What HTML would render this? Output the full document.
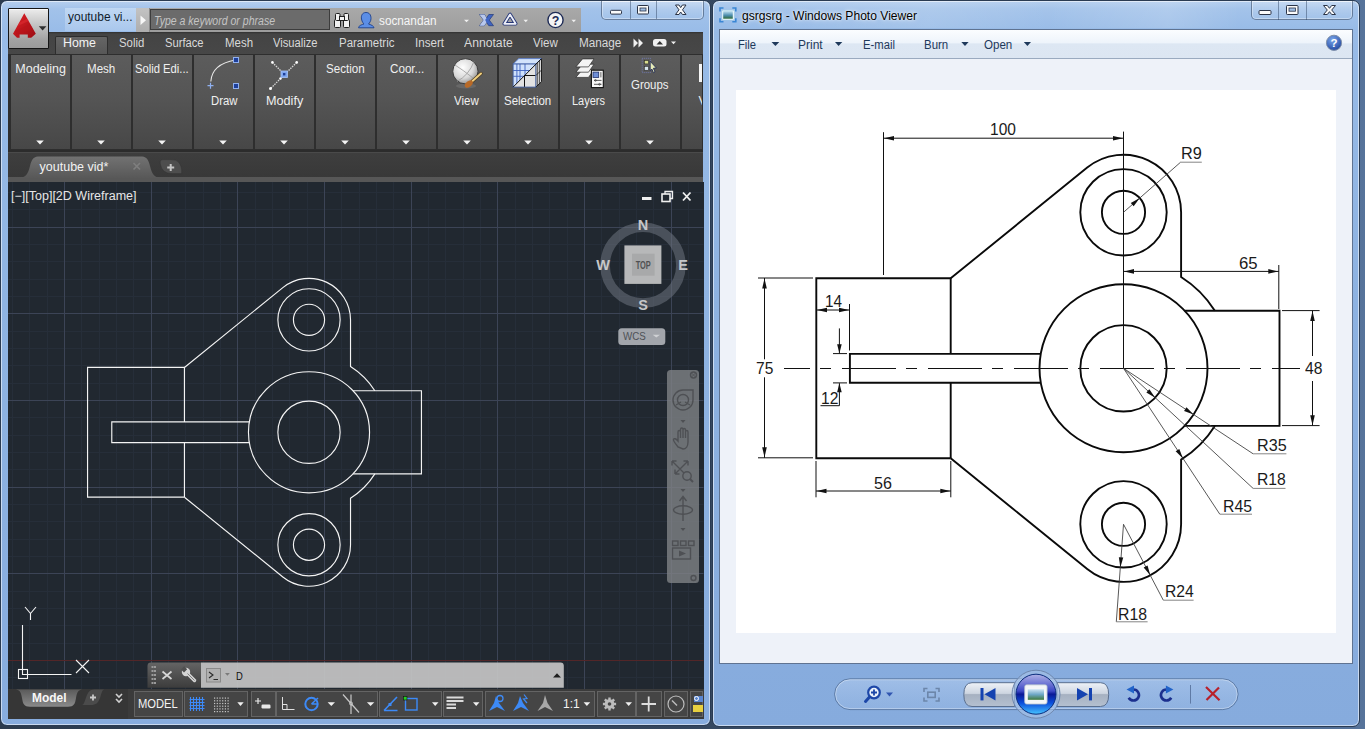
<!DOCTYPE html><html><head><meta charset="utf-8"><style>
html,body{margin:0;padding:0;}
body{width:1365px;height:729px;overflow:hidden;position:relative;background:#3a4f69;font-family:"Liberation Sans",sans-serif;}
.r{position:absolute;box-sizing:border-box;}
.t{position:absolute;white-space:nowrap;}
svg{position:absolute;left:0;top:0;overflow:visible;}
</style></head><body>
<div class="r" style="left:0.00px;top:0.00px;width:1365.00px;height:729.00px;background:linear-gradient(90deg,#2c3b4e,#34465e 50%,#56739a);"></div>
<div class="r" style="left:0.00px;top:0.00px;width:711.00px;height:726.00px;border-radius:7px;background:linear-gradient(180deg,#b6cfee 0px,#a2c2ea 8px,#99bce8 30px,#8fb4e2 300px,#87acde 726px);border:1px solid #2a3b52;box-shadow:inset 0 0 0 1px rgba(255,255,255,0.55);"></div>
<div class="r" style="left:64.50px;top:8.00px;width:71.50px;height:23.00px;background:linear-gradient(180deg,rgba(215,232,250,0.55),rgba(200,220,245,0.35));"></div>
<div class="t" style="left:68.00px;top:8.75px;font-size:12.50px;line-height:17px;color:#101c2c;transform:scaleX(0.9570);transform-origin:left center;">youtube vi...</div>
<div class="r" style="left:136.00px;top:8.00px;width:445.00px;height:23.50px;background:linear-gradient(180deg,#a9a9a9,#9d9d9d);"></div>
<div class="r" style="left:136.00px;top:8.00px;width:14.00px;height:23.50px;background:linear-gradient(180deg,#c3c3c3,#adadad);border-right:1px solid #8a8a8a;"></div>
<svg width="1365" height="729"><path d="M140.5 15.5 L146 20.3 L140.5 25 Z" fill="#f8f8f8"/></svg>
<div class="r" style="left:150.00px;top:9.30px;width:180.00px;height:21.10px;background:#6b6b6b;border:1px solid #3c3c3c;"></div>
<div class="t" style="left:153.80px;top:12.84px;font-size:12.00px;line-height:16px;color:#c4c4c4;font-style:italic;transform:scaleX(0.8779);transform-origin:left center;">Type a keyword or phrase</div>
<svg width="1365" height="729">
<g fill="#f2f2f2" stroke="#202020" stroke-width="1">
<rect x="334.5" y="19.5" width="6" height="8" rx="1"/><rect x="343.5" y="19.5" width="6" height="8" rx="1"/>
<rect x="335.5" y="13.5" width="4.5" height="7" rx="1"/><rect x="344" y="13.5" width="4.5" height="7" rx="1"/>
<rect x="339.5" y="16.5" width="5" height="4"/>
</g>
<path d="M366 12.5 C362 12.5 361 16 361.5 19 C362 22 363.5 23.5 364 24 C360 25 358.5 26.5 358.5 27.8 L374 27.8 C374 26.5 372 25 368.5 24 C369.5 23 371 21 371 18.5 C371 15 369.5 12.5 366 12.5 Z" fill="#5b8ee6" stroke="#1d3f8c" stroke-width="0.9"/>
<path d="M464 19.8 L469 19.8 L466.5 22.3 Z" fill="#f0f0f0"/>
<path d="M479.5 14.5 L484.5 14.5 L486.5 18 L488.8 14.5 L493.5 14.5 L489.3 20.1 L493.5 25.7 L488.8 25.7 L486.5 22.4 L484.2 25.7 L479.5 25.7 L483.6 20.1 Z" fill="#3f64c2" stroke="#22397a" stroke-width="0.7"/>
<path d="M479.5 14.5 L484.5 14.5 L486.5 18 L485.2 20.1 L486.5 22.4 L484.2 25.7 L479.5 25.7 L483.6 20.1 Z" fill="#b9c8ec"/>
<path d="M510 14.5 L504.3 23.8 L515.7 23.8 Z" fill="none" stroke="#263778" stroke-width="3.6" stroke-linejoin="round"/>
<path d="M510 14.5 L504.3 23.8 L515.7 23.8 Z" fill="none" stroke="#eef0f8" stroke-width="1.8" stroke-linejoin="round"/>
<path d="M523.5 19.8 L528 19.8 L525.8 22.3 Z" fill="#f0f0f0"/>
<circle cx="555.5" cy="20" r="7.6" fill="#f4f4f4" stroke="#1d2a55" stroke-width="1.4"/>
<text x="555.5" y="24.6" font-family="Liberation Sans" font-weight="bold" font-size="12.5" fill="#1d2a55" text-anchor="middle">?</text>
<path d="M571.5 19.8 L576 19.8 L573.8 22.3 Z" fill="#f0f0f0"/>
</svg>
<div class="t" style="left:379.00px;top:12.95px;font-size:12.50px;line-height:17px;color:#f6f6f6;transform:scaleX(0.9402);transform-origin:left center;">socnandan</div>
<div class="r" style="left:601.00px;top:0.50px;width:103.00px;height:19.00px;border:1px solid rgba(40,60,90,0.55);border-top:none;border-radius:0 0 5px 5px;background:linear-gradient(180deg,rgba(255,255,255,0.25),rgba(255,255,255,0.05));box-shadow:inset 0 0 0 1px rgba(255,255,255,0.35);"></div>
<div class="r" style="left:629.50px;top:1.00px;width:1.00px;height:18.00px;background:rgba(40,60,90,0.45);"></div>
<div class="r" style="left:656.00px;top:1.00px;width:1.00px;height:18.00px;background:rgba(40,60,90,0.45);"></div>
<svg width="1365" height="729">
<rect x="610.5" y="10.3" width="11" height="3.8" rx="1" fill="#fafafa" stroke="#2a3346" stroke-width="1"/>
<rect x="637.5" y="5.5" width="11" height="8.5" rx="0.8" fill="#fafafa" stroke="#2a3346" stroke-width="1"/>
<rect x="640" y="8" width="6" height="3" fill="#9fbde4" stroke="#2a3346" stroke-width="0.8"/>
<path d="M675.5 5 L679 5 L680.7 7.6 L682.4 5 L686 5 L682.5 9.8 L686 14.5 L682.4 14.5 L680.7 12 L679 14.5 L675.5 14.5 L679 9.8 Z" fill="#fafafa" stroke="#2a3346" stroke-width="1"/>
</svg>
<div class="r" style="left:8.00px;top:31.50px;width:695.00px;height:22.00px;background:linear-gradient(180deg,#303030 0px,#444444 2px,#474747 100%);"></div>
<div class="r" style="left:54.50px;top:35.50px;width:53.00px;height:18.00px;background:linear-gradient(180deg,#656565,#575757);border:1px solid #2e2e2e;border-bottom:none;border-radius:2px 2px 0 0;"></div>
<div class="t" style="left:63.30px;top:34.75px;font-size:12.50px;line-height:17px;color:#f4f4f4;transform:scaleX(0.9897);transform-origin:left center;">Home</div>
<div class="t" style="left:119.30px;top:34.75px;font-size:12.50px;line-height:17px;color:#d9d9d9;transform:scaleX(0.9102);transform-origin:left center;">Solid</div>
<div class="t" style="left:165.40px;top:34.75px;font-size:12.50px;line-height:17px;color:#d9d9d9;transform:scaleX(0.8961);transform-origin:left center;">Surface</div>
<div class="t" style="left:224.50px;top:34.75px;font-size:12.50px;line-height:17px;color:#d9d9d9;transform:scaleX(0.9161);transform-origin:left center;">Mesh</div>
<div class="t" style="left:273.40px;top:34.75px;font-size:12.50px;line-height:17px;color:#d9d9d9;transform:scaleX(0.8956);transform-origin:left center;">Visualize</div>
<div class="t" style="left:339.00px;top:34.75px;font-size:12.50px;line-height:17px;color:#d9d9d9;transform:scaleX(0.9168);transform-origin:left center;">Parametric</div>
<div class="t" style="left:414.70px;top:34.75px;font-size:12.50px;line-height:17px;color:#d9d9d9;transform:scaleX(0.9309);transform-origin:left center;">Insert</div>
<div class="t" style="left:464.20px;top:34.75px;font-size:12.50px;line-height:17px;color:#d9d9d9;transform:scaleX(0.9752);transform-origin:left center;">Annotate</div>
<div class="t" style="left:533.10px;top:34.75px;font-size:12.50px;line-height:17px;color:#d9d9d9;transform:scaleX(0.9231);transform-origin:left center;">View</div>
<div class="t" style="left:578.50px;top:34.75px;font-size:12.50px;line-height:17px;color:#d9d9d9;transform:scaleX(0.9365);transform-origin:left center;">Manage</div>
<svg width="1365" height="729">
<path d="M633.5 38.5 L633.5 47.5 L638 43 Z M638.5 38.5 L638.5 47.5 L643 43 Z" fill="#f0f0f0"/>
<rect x="653" y="39" width="13.5" height="7.5" rx="2.5" fill="#f0f0f0"/>
<path d="M656.5 44.5 L659.8 41 L663 44.5 Z" fill="#333"/>
<path d="M671 41.5 L676 41.5 L673.5 44.3 Z" fill="#f0f0f0"/>
</svg>
<div class="r" style="left:8.00px;top:53.50px;width:695.00px;height:96.00px;background:#2e2e2e;"></div>
<div class="r" style="left:10.50px;top:54.50px;width:59.00px;height:94.00px;background:linear-gradient(180deg,#5c5c5c 0%,#555555 45%,#474747 100%);"></div>
<svg width="1365" height="729"><path d="M36.2 140.5 L43.8 140.5 L40.0 144.5 Z" fill="#f4f4f4"/></svg>
<div class="r" style="left:71.50px;top:54.50px;width:59.00px;height:94.00px;background:linear-gradient(180deg,#5c5c5c 0%,#555555 45%,#474747 100%);"></div>
<svg width="1365" height="729"><path d="M97.2 140.5 L104.8 140.5 L101.0 144.5 Z" fill="#f4f4f4"/></svg>
<div class="r" style="left:132.50px;top:54.50px;width:59.00px;height:94.00px;background:linear-gradient(180deg,#5c5c5c 0%,#555555 45%,#474747 100%);"></div>
<svg width="1365" height="729"><path d="M158.2 140.5 L165.8 140.5 L162.0 144.5 Z" fill="#f4f4f4"/></svg>
<div class="r" style="left:193.50px;top:54.50px;width:59.00px;height:94.00px;background:linear-gradient(180deg,#5c5c5c 0%,#555555 45%,#474747 100%);"></div>
<svg width="1365" height="729"><path d="M219.2 140.5 L226.8 140.5 L223.0 144.5 Z" fill="#f4f4f4"/></svg>
<div class="r" style="left:254.50px;top:54.50px;width:59.00px;height:94.00px;background:linear-gradient(180deg,#5c5c5c 0%,#555555 45%,#474747 100%);"></div>
<svg width="1365" height="729"><path d="M280.2 140.5 L287.8 140.5 L284.0 144.5 Z" fill="#f4f4f4"/></svg>
<div class="r" style="left:315.50px;top:54.50px;width:59.00px;height:94.00px;background:linear-gradient(180deg,#5c5c5c 0%,#555555 45%,#474747 100%);"></div>
<svg width="1365" height="729"><path d="M341.2 140.5 L348.8 140.5 L345.0 144.5 Z" fill="#f4f4f4"/></svg>
<div class="r" style="left:376.50px;top:54.50px;width:59.00px;height:94.00px;background:linear-gradient(180deg,#5c5c5c 0%,#555555 45%,#474747 100%);"></div>
<svg width="1365" height="729"><path d="M402.2 140.5 L409.8 140.5 L406.0 144.5 Z" fill="#f4f4f4"/></svg>
<div class="r" style="left:437.50px;top:54.50px;width:59.00px;height:94.00px;background:linear-gradient(180deg,#5c5c5c 0%,#555555 45%,#474747 100%);"></div>
<svg width="1365" height="729"><path d="M463.2 140.5 L470.8 140.5 L467.0 144.5 Z" fill="#f4f4f4"/></svg>
<div class="r" style="left:498.50px;top:54.50px;width:59.00px;height:94.00px;background:linear-gradient(180deg,#5c5c5c 0%,#555555 45%,#474747 100%);"></div>
<svg width="1365" height="729"><path d="M524.2 140.5 L531.8 140.5 L528.0 144.5 Z" fill="#f4f4f4"/></svg>
<div class="r" style="left:559.50px;top:54.50px;width:59.00px;height:94.00px;background:linear-gradient(180deg,#5c5c5c 0%,#555555 45%,#474747 100%);"></div>
<svg width="1365" height="729"><path d="M585.2 140.5 L592.8 140.5 L589.0 144.5 Z" fill="#f4f4f4"/></svg>
<div class="r" style="left:620.50px;top:54.50px;width:59.00px;height:94.00px;background:linear-gradient(180deg,#5c5c5c 0%,#555555 45%,#474747 100%);"></div>
<svg width="1365" height="729"><path d="M646.2 140.5 L653.8 140.5 L650.0 144.5 Z" fill="#f4f4f4"/></svg>
<div class="r" style="left:681.50px;top:54.50px;width:20.50px;height:94.00px;background:linear-gradient(180deg,#5c5c5c 0%,#555555 45%,#474747 100%);"></div>
<div class="t" style="left:15.30px;top:60.85px;font-size:12.50px;line-height:17px;color:#f0f0f0;">Modeling</div>
<div class="t" style="left:86.50px;top:60.85px;font-size:12.50px;line-height:17px;color:#f0f0f0;transform:scaleX(0.9259);transform-origin:left center;">Mesh</div>
<div class="t" style="left:135.00px;top:60.85px;font-size:12.50px;line-height:17px;color:#f0f0f0;transform:scaleX(0.8987);transform-origin:left center;">Solid Edi...</div>
<div class="t" style="left:210.50px;top:92.75px;font-size:12.50px;line-height:17px;color:#f0f0f0;transform:scaleX(0.9085);transform-origin:left center;">Draw</div>
<div class="t" style="left:265.70px;top:92.75px;font-size:12.50px;line-height:17px;color:#f0f0f0;transform:scaleX(1.0105);transform-origin:left center;">Modify</div>
<div class="t" style="left:326.00px;top:60.85px;font-size:12.50px;line-height:17px;color:#f0f0f0;transform:scaleX(0.9282);transform-origin:left center;">Section</div>
<div class="t" style="left:389.50px;top:60.85px;font-size:12.50px;line-height:17px;color:#f0f0f0;transform:scaleX(0.9316);transform-origin:left center;">Coor...</div>
<div class="t" style="left:454.00px;top:92.75px;font-size:12.50px;line-height:17px;color:#f0f0f0;transform:scaleX(0.9193);transform-origin:left center;">View</div>
<div class="t" style="left:504.30px;top:92.75px;font-size:12.50px;line-height:17px;color:#f0f0f0;transform:scaleX(0.9179);transform-origin:left center;">Selection</div>
<div class="t" style="left:572.00px;top:92.75px;font-size:12.50px;line-height:17px;color:#f0f0f0;transform:scaleX(0.8796);transform-origin:left center;">Layers</div>
<div class="t" style="left:631.20px;top:76.95px;font-size:12.50px;line-height:17px;color:#f0f0f0;transform:scaleX(0.9173);transform-origin:left center;">Groups</div>
<div class="r" style="left:698.70px;top:64.00px;width:3.30px;height:18.00px;background:#f4f4f4;"></div>
<div class="r" style="left:681.5px;top:54px;width:20.5px;height:94px;overflow:hidden;"><div class="t" style="left:17.00px;top:38.75px;font-size:12.50px;line-height:17px;color:#f0f0f0;">V</div></div>
<svg width="1365" height="729">
<!-- draw icon -->
<path d="M210.8 81.5 Q212 64 235.5 60" fill="none" stroke="#e8e8e8" stroke-width="1.1"/>
<rect x="233.5" y="57.5" width="5" height="5" fill="#1e3f9a" stroke="#8fb0f0" stroke-width="1"/>
<rect x="233.5" y="83.5" width="5" height="5" fill="#1e3f9a" stroke="#8fb0f0" stroke-width="1"/>
<path d="M207.5 85.7 L213.5 85.7 M210.5 82.7 L210.5 88.7" stroke="#8fb0f0" stroke-width="1.2"/>
<!-- modify icon -->
<path d="M272.4 62.4 L284.3 74.3 M296.7 62.4 L270.5 88.6" stroke="#d8d8d8" stroke-width="1.3" stroke-dasharray="1.5 1"/>
<circle cx="272.4" cy="62.4" r="1.3" fill="#fff"/><circle cx="296.7" cy="62.4" r="1.3" fill="#fff"/><circle cx="270.5" cy="88.6" r="1.5" fill="#fff"/><circle cx="280.5" cy="78.5" r="1.2" fill="#fff"/>
<rect x="281" y="71" width="6.5" height="6.5" fill="#7da6f0" stroke="#a9c4f8" stroke-width="0.8"/>
<rect x="283" y="73" width="2.4" height="2.4" fill="#1e3f9a"/>
<!-- view icon -->
<defs><radialGradient id="sph" cx="0.4" cy="0.35" r="0.7"><stop offset="0" stop-color="#ffffff"/><stop offset="0.6" stop-color="#d9d9d9"/><stop offset="1" stop-color="#8c8c8c"/></radialGradient>
<linearGradient id="cube" x1="0" y1="0" x2="1" y2="1"><stop offset="0" stop-color="#d5e6fb"/><stop offset="1" stop-color="#8fb0de"/></linearGradient></defs>
<ellipse cx="466" cy="86" rx="10" ry="2.5" fill="#8a8a8a" opacity="0.35"/>
<circle cx="465.4" cy="71.3" r="12.6" fill="url(#sph)" stroke="#333" stroke-width="0.9"/>
<path d="M455 65 Q463 70 473 78 M474 61.5 Q469 75 457 81.5" fill="none" stroke="#9a9a9a" stroke-width="0.8"/>
<path d="M481 73.5 L472.5 81" stroke="#4a3a20" stroke-width="3.4" stroke-linecap="round"/>
<path d="M481 73.5 L472.5 81" stroke="#f0d080" stroke-width="2" stroke-linecap="round"/>
<ellipse cx="468.8" cy="84" rx="4.6" ry="2.8" fill="#b86a28" transform="rotate(-40 468.8 84)"/>
<!-- selection cube -->
<defs><clipPath id="cubeU"><path d="M513.1 64 L535.8 64 L513.1 87.1 Z"/></clipPath><clipPath id="cubeL"><path d="M535.8 64 L535.8 87.1 L513.1 87.1 Z"/></clipPath></defs>
<path d="M535.8 64 L541.5 58.6 L541.5 81.7 L535.8 87.1 Z" fill="#e6e6e6" stroke="#111" stroke-width="0.9"/>
<path d="M537.7 62.2 L537.7 85.3 M539.6 60.4 L539.6 83.5 M535.8 75.5 L541.5 70.1" stroke="#111" stroke-width="0.7"/>
<path d="M513.1 64 L518.8 58.6 L541.5 58.6 L535.8 64 Z" fill="#d2e3fb" stroke="#5a7cc8" stroke-width="0.9"/>
<rect x="513.1" y="64" width="22.7" height="23.1" fill="#cfe1fb"/>
<g clip-path="url(#cubeL)"><rect x="513.1" y="64" width="22.7" height="23.1" fill="#e2e2e2"/>
<path d="M524.5 64 L524.5 87.1 M513.1 75.5 L535.8 75.5" stroke="#111" stroke-width="1"/></g>
<g clip-path="url(#cubeU)"><path d="M516.9 64 L516.9 87.1 M520 64 L520 87.1 M525 64 L525 87.1 M513.1 70.5 L535.8 70.5 M513.1 76.3 L535.8 76.3" stroke="#3d62c0" stroke-width="0.9"/></g>
<rect x="513.1" y="64" width="22.7" height="23.1" fill="none" stroke="#3d5a9a" stroke-width="0.9"/>
<path d="M513.1 87.1 L541.5 58.6" stroke="#111" stroke-width="1"/>
<!-- layers -->
<g fill="#f4f4f4" stroke="#2a2a2a" stroke-width="0.7">
<path d="M575.9 77.4 L588.5 77.4 L594 69.4 L582.5 69.4 Z"/>
<path d="M575.9 72.2 L588.5 72.2 L594 64.2 L582.5 64.2 Z"/>
<path d="M575.9 66.9 L588.5 66.9 L594 58.9 L582.5 58.9 Z"/>
</g>
<rect x="591.4" y="70.2" width="11.9" height="17.4" fill="#f8f8f8" stroke="#111" stroke-width="1.1"/>
<rect x="593" y="72.1" width="5.7" height="5.3" fill="#6f8fd8" stroke="#1e2f6a" stroke-width="0.8"/>
<rect x="600" y="72.1" width="1.6" height="5.3" fill="#9a9a9a"/>
<path d="M594 80.4 L601.5 80.4 M594 84.3 L601.5 84.3" stroke="#333" stroke-width="0.8"/>
<circle cx="595.5" cy="80.4" r="0.9" fill="none" stroke="#333" stroke-width="0.6"/><circle cx="599.5" cy="84.3" r="0.9" fill="none" stroke="#333" stroke-width="0.6"/>
<!-- groups -->
<rect x="642.2" y="58.3" width="8.4" height="14.3" fill="none" stroke="#7a86d0" stroke-width="0.7" stroke-dasharray="1 1"/>
<rect x="644.5" y="60.6" width="3.9" height="3.3" fill="#d8dc8c" stroke="#222" stroke-width="0.5"/>
<rect x="644.5" y="66.5" width="3.9" height="3.7" fill="#d8e6ee" stroke="#222" stroke-width="0.5"/>
<path d="M650.2 61.3 L656.4 68 L653.4 68.3 L655 72 L653.5 72.7 L651.8 69 L650.2 70.8 Z" fill="#e6ebb8" stroke="#1a2350" stroke-width="0.8"/>
</svg>
<div class="r" style="left:8.00px;top:149.50px;width:695.00px;height:2.50px;background:#2c2c2c;"></div>
<div class="r" style="left:8.00px;top:152.00px;width:695.00px;height:25.50px;background:linear-gradient(180deg,#3e3e3e,#383838);border-top:1px solid #4a4a4a;"></div>
<div class="r" style="left:8.00px;top:177.00px;width:695.00px;height:4.50px;background:#575757;"></div>
<svg width="1365" height="729">
<defs><linearGradient id="ftab" x1="0" y1="0" x2="0" y2="1"><stop offset="0" stop-color="#727272"/><stop offset="1" stop-color="#585858"/></linearGradient></defs>
<path d="M18 178 C26 178 28 174 30 166 C32 158 34 156.5 40 156.5 L140 156.5 C146 156.5 148 158 150 166 C152 174 154 178 162 178 Z" fill="url(#ftab)"/>
<path d="M163 159.6 Q159.5 159.6 160.2 163.5 Q161.5 173.6 172 173.6 L181.7 173.6 Q182.2 166 178.5 162 Q176.5 159.6 171 159.6 Z" fill="#4e4e4e" stroke="#353535" stroke-width="0.6"/>
<path d="M167.2 167.5 L174.2 167.5 M170.7 164 L170.7 171" stroke="#c4c4c4" stroke-width="2"/>
<path d="M133.5 163 L140 169.5 M140 163 L133.5 169.5" stroke="#7e7e7e" stroke-width="1.7"/>
</svg>
<div class="t" style="left:39.60px;top:159.05px;font-size:12.50px;line-height:17px;color:#f2f2f2;">youtube vid*</div>
<div class="r" style="left:8.00px;top:181.50px;width:695.50px;height:507.50px;background:#212830;overflow:hidden;"></div>
<svg width="1365" height="729"><defs><clipPath id="vpc"><rect x="8" y="181.5" width="695.5" height="507.5"/></clipPath></defs><g clip-path="url(#vpc)" shape-rendering="crispEdges"><g stroke="#262e39" stroke-width="1"><line x1="12.50" y1="181.5" x2="12.50" y2="689"/><line x1="29.50" y1="181.5" x2="29.50" y2="689"/><line x1="47.50" y1="181.5" x2="47.50" y2="689"/><line x1="81.50" y1="181.5" x2="81.50" y2="689"/><line x1="99.50" y1="181.5" x2="99.50" y2="689"/><line x1="116.50" y1="181.5" x2="116.50" y2="689"/><line x1="133.50" y1="181.5" x2="133.50" y2="689"/><line x1="168.50" y1="181.5" x2="168.50" y2="689"/><line x1="185.50" y1="181.5" x2="185.50" y2="689"/><line x1="203.50" y1="181.5" x2="203.50" y2="689"/><line x1="220.50" y1="181.5" x2="220.50" y2="689"/><line x1="255.50" y1="181.5" x2="255.50" y2="689"/><line x1="272.50" y1="181.5" x2="272.50" y2="689"/><line x1="289.50" y1="181.5" x2="289.50" y2="689"/><line x1="307.50" y1="181.5" x2="307.50" y2="689"/><line x1="341.50" y1="181.5" x2="341.50" y2="689"/><line x1="359.50" y1="181.5" x2="359.50" y2="689"/><line x1="376.50" y1="181.5" x2="376.50" y2="689"/><line x1="393.50" y1="181.5" x2="393.50" y2="689"/><line x1="428.50" y1="181.5" x2="428.50" y2="689"/><line x1="445.50" y1="181.5" x2="445.50" y2="689"/><line x1="463.50" y1="181.5" x2="463.50" y2="689"/><line x1="480.50" y1="181.5" x2="480.50" y2="689"/><line x1="515.50" y1="181.5" x2="515.50" y2="689"/><line x1="532.50" y1="181.5" x2="532.50" y2="689"/><line x1="549.50" y1="181.5" x2="549.50" y2="689"/><line x1="567.50" y1="181.5" x2="567.50" y2="689"/><line x1="601.50" y1="181.5" x2="601.50" y2="689"/><line x1="619.50" y1="181.5" x2="619.50" y2="689"/><line x1="636.50" y1="181.5" x2="636.50" y2="689"/><line x1="653.50" y1="181.5" x2="653.50" y2="689"/><line x1="688.50" y1="181.5" x2="688.50" y2="689"/><line x1="8" y1="192.50" x2="703.5" y2="192.50"/><line x1="8" y1="209.50" x2="703.5" y2="209.50"/><line x1="8" y1="244.50" x2="703.5" y2="244.50"/><line x1="8" y1="261.50" x2="703.5" y2="261.50"/><line x1="8" y1="279.50" x2="703.5" y2="279.50"/><line x1="8" y1="296.50" x2="703.5" y2="296.50"/><line x1="8" y1="331.50" x2="703.5" y2="331.50"/><line x1="8" y1="348.50" x2="703.5" y2="348.50"/><line x1="8" y1="365.50" x2="703.5" y2="365.50"/><line x1="8" y1="383.50" x2="703.5" y2="383.50"/><line x1="8" y1="417.50" x2="703.5" y2="417.50"/><line x1="8" y1="435.50" x2="703.5" y2="435.50"/><line x1="8" y1="452.50" x2="703.5" y2="452.50"/><line x1="8" y1="469.50" x2="703.5" y2="469.50"/><line x1="8" y1="504.50" x2="703.5" y2="504.50"/><line x1="8" y1="521.50" x2="703.5" y2="521.50"/><line x1="8" y1="539.50" x2="703.5" y2="539.50"/><line x1="8" y1="556.50" x2="703.5" y2="556.50"/><line x1="8" y1="591.50" x2="703.5" y2="591.50"/><line x1="8" y1="608.50" x2="703.5" y2="608.50"/><line x1="8" y1="625.50" x2="703.5" y2="625.50"/><line x1="8" y1="643.50" x2="703.5" y2="643.50"/><line x1="8" y1="677.50" x2="703.5" y2="677.50"/></g><g stroke="#3c4456" stroke-width="1"><line x1="64.50" y1="181.5" x2="64.50" y2="689"/><line x1="151.50" y1="181.5" x2="151.50" y2="689"/><line x1="237.50" y1="181.5" x2="237.50" y2="689"/><line x1="324.50" y1="181.5" x2="324.50" y2="689"/><line x1="411.50" y1="181.5" x2="411.50" y2="689"/><line x1="497.50" y1="181.5" x2="497.50" y2="689"/><line x1="584.50" y1="181.5" x2="584.50" y2="689"/><line x1="671.50" y1="181.5" x2="671.50" y2="689"/><line x1="8" y1="227.50" x2="703.5" y2="227.50"/><line x1="8" y1="313.50" x2="703.5" y2="313.50"/><line x1="8" y1="400.50" x2="703.5" y2="400.50"/><line x1="8" y1="487.50" x2="703.5" y2="487.50"/><line x1="8" y1="573.50" x2="703.5" y2="573.50"/></g><line x1="8" y1="660.50" x2="703.5" y2="660.50" stroke="#532628"/></g></svg>
<svg width="1365" height="729"><g fill="none" stroke="#f4f4f4" stroke-width="1.15"><path d="M184.44 367.43 L282.84 287.60 A41.52 41.52 0 0 1 350.52 319.85 L350.52 366.45 A77.85 77.85 0 0 1 374.85 390.78"/><path d="M353.07 390.78 L421.45 390.78 L421.45 473.82 L353.07 473.82"/><path d="M374.85 473.82 A77.85 77.85 0 0 1 350.52 498.15 L350.52 544.75 A41.52 41.52 0 0 1 282.84 577.00 L184.44 497.18"/><path d="M184.44 421.92 L184.44 367.43 L87.56 367.43 L87.56 497.18 L184.44 497.18"/><path d="M184.44 442.68 L184.44 497.18"/><path d="M249.35 421.92 L111.78 421.92 L111.78 442.68 L249.35 442.68 L249.35 442.68"/><circle cx="309.00" cy="432.30" r="60.55"/><circle cx="309.00" cy="432.30" r="31.14"/><circle cx="309.00" cy="319.85" r="31.14"/><circle cx="309.00" cy="319.85" r="15.57"/><circle cx="309.00" cy="544.75" r="31.14"/><circle cx="309.00" cy="544.75" r="15.57"/></g></svg>
<div class="t" style="left:11.00px;top:187.74px;font-size:12.00px;line-height:16px;color:#e6e6e6;transform:scaleX(1.0427);transform-origin:left center;">[−][Top][2D Wireframe]</div>
<svg width="1365" height="729">
<rect x="642" y="197" width="9.5" height="3" fill="#f0f0f0"/>
<rect x="662" y="194" width="8" height="7.5" fill="none" stroke="#f0f0f0" stroke-width="1.6"/>
<path d="M665 194 L665 191.5 L672.5 191.5 L672.5 198.5 L670 198.5" fill="none" stroke="#f0f0f0" stroke-width="1.3"/>
<path d="M683 192.5 L690.5 200.5 M690.5 192.5 L683 200.5" stroke="#f0f0f0" stroke-width="1.8"/>
<!-- viewcube -->
<circle cx="643" cy="265.2" r="37.9" fill="none" stroke="#69707a" stroke-opacity="0.58" stroke-width="9.6"/>
<rect x="624.4" y="245.4" width="37" height="38.5" fill="#b7b8b9"/>
<rect x="632" y="253.7" width="22.6" height="22" fill="#a8a9aa"/>
<text x="635.7" y="268.8" font-family="Liberation Sans" font-weight="bold" font-size="11" fill="#4f5052" textLength="15.1" lengthAdjust="spacingAndGlyphs">TOP</text>
<g font-family="Liberation Sans" font-weight="bold" font-size="14.5" fill="#c6c7c9" text-anchor="middle">
<text x="643" y="229.6">N</text><text x="643" y="310.3">S</text><text x="603" y="270.3">W</text><text x="683.2" y="270.3">E</text>
</g>
<rect x="618.3" y="328.3" width="47" height="16.7" rx="3.5" fill="#a2a5ab"/>
<text x="623" y="340.2" font-family="Liberation Sans" font-size="10.5" fill="#4e5156" textLength="22.8" lengthAdjust="spacingAndGlyphs">WCS</text>
<path d="M652.7 334.8 L660 334.8 L656.3 337.5 Z" fill="#cfd1d4"/>
<!-- nav bar -->
<rect x="667" y="370" width="32" height="213" rx="3.5" fill="#7f8286" fill-opacity="0.8"/>
<g fill="none" stroke="#4e5054" stroke-width="1.4">
<circle cx="693.5" cy="375" r="3"/><path d="M691.5 373 L695.5 377 M695.5 373 L691.5 377" stroke-width="0.9"/>
<path d="M683 390 A10 10 0 1 0 693 400 L693 390 Z"/>
<circle cx="683" cy="400" r="5.5"/>
<path d="M676 405 L681 402 M690 405 L685 402" stroke-width="1.1"/>
<path d="M678 447 C676 444 673 441 673.5 439.5 C674 438 676 438.5 678 441 L678 432 C678 430 680.5 430 680.5 432 L680.5 438 L680.5 429.5 C680.5 427.5 683 427.5 683 429.5 L683 438 L683 430 C683 428 685.5 428 685.5 430 L685.5 438 L685.5 432 C685.5 430 688 430 688 432 L688 442 C688 446 686 449 683 449 Z"/>
<path d="M672 461 L684 473 M688 461 L675 474 M672 461 L672 465.5 M672 461 L676.5 461 M688 461 L688 465.5 M688 461 L683.5 461 M675 474 L675 469.5 M675 474 L679.5 474"/>
<circle cx="687" cy="476" r="4.2"/><path d="M690 479 L693 482" stroke-width="2"/>
<path d="M683 497 L683 521 M679.5 501 L683 496.5 L686.5 501"/>
<ellipse cx="683" cy="510" rx="9.5" ry="4.2"/>
<rect x="672.5" y="541" width="5.5" height="4.5"/><rect x="680.5" y="541" width="5.5" height="4.5"/><rect x="688.5" y="541" width="5.5" height="4.5"/>
<rect x="672.5" y="548" width="18" height="11"/>
<circle cx="693.5" cy="578" r="2.5"/>
</g>
<path d="M679 550.5 L686 553.5 L679 556.5 Z" fill="#4e5054"/>
<g fill="#4e5054"><path d="M680.5 420 L685.5 420 L683 423 Z"/><path d="M680.5 489 L685.5 489 L683 492 Z"/><path d="M680.5 528 L685.5 528 L683 531 Z"/></g>
<!-- UCS icon -->
<g fill="none" stroke="#f4f4f4" stroke-width="1.1">
<path d="M22.5 625 L22.5 674.5 L71.5 674.5"/>
<rect x="18.5" y="669.5" width="9" height="9"/>
<path d="M25 607 L30.5 613.5 L36 607 M30.5 613.5 L30.5 620"/>
<path d="M76 660 L89 673 M89 660 L76 673"/>
</g>
</svg>
<svg width="1365" height="729">
<defs><linearGradient id="cmdd" x1="0" y1="0" x2="0" y2="1"><stop offset="0" stop-color="#646464"/><stop offset="1" stop-color="#3c3c3c"/></linearGradient></defs>
<path d="M147.5 687.8 L147.5 666 Q147.5 662.6 151 662.6 L201 662.6 L201 687.8 Z" fill="url(#cmdd)"/>
<path d="M201 662.6 L560.5 662.6 Q563.8 662.6 563.8 666 L563.8 687.8 L201 687.8 Z" fill="#c4c4c4" fill-opacity="0.93"/>
<g fill="#9a9a9a"><rect x="151.5" y="666" width="2" height="2"/><rect x="154" y="666" width="2" height="2"/><rect x="151.5" y="670" width="2" height="2"/><rect x="154" y="670" width="2" height="2"/><rect x="151.5" y="674" width="2" height="2"/><rect x="154" y="674" width="2" height="2"/><rect x="151.5" y="678" width="2" height="2"/><rect x="154" y="678" width="2" height="2"/><rect x="151.5" y="682" width="2" height="2"/><rect x="154" y="682" width="2" height="2"/></g>
<path d="M162.5 671.5 L171.5 679 M171.5 671.5 L162.5 679" stroke="#d6d6d6" stroke-width="1.7"/>
<path d="M187.5 673.5 L194.5 680.5" stroke="#d4d4d4" stroke-width="3.4" stroke-linecap="round"/>
<circle cx="186" cy="672" r="4.2" fill="#d4d4d4"/>
<path d="M181 669.5 L184.2 666.3 L187.2 669.3 L184 672.5 Z" fill="#505050"/>
<path d="M187.5 673.5 L194.5 680.5" stroke="#6a6a6a" stroke-width="0.8"/>
<rect x="206.5" y="668.5" width="14" height="13.5" fill="#b0b0b0" stroke="#8a8a8a" stroke-width="1"/>
<path d="M209 672 L213 675 L209 678 M213.5 679.5 L218 679.5" fill="none" stroke="#2a2a2a" stroke-width="1.1"/>
<path d="M225 673 L229.8 673 L227.4 675.8 Z" fill="#7a7a7a"/>
<path d="M553 677.5 L561 677.5 L557 673.3 Z" fill="#1e1e1e"/>
</svg>
<div class="t" style="left:235.50px;top:669.41px;font-size:10.50px;line-height:14px;color:#111111;transform:scaleX(0.8967);transform-origin:left center;">D</div>
<div class="r" style="left:8.00px;top:689.00px;width:695.50px;height:29.50px;background:#363636;"></div>
<div class="r" style="left:128.00px;top:689.00px;width:575.50px;height:29.50px;background:#3b3b3b;"></div>
<svg width="1365" height="729">
<defs><linearGradient id="mtab" x1="0" y1="0" x2="0" y2="1"><stop offset="0" stop-color="#5a5a5a"/><stop offset="1" stop-color="#8a8a8a"/></linearGradient></defs>
<path d="M14 689.5 C20 689.5 21 692 22 698 C23 704 24 706.7 30 706.7 L68 706.7 C74 706.7 75 704 76 698 C77 692 78 689.5 84 689.5 Z" fill="url(#mtab)"/>
<path d="M82 705 C84 705 85 700 87 695 C89 690.5 91 689.6 96 689.6 L104.5 689.6 C102 689.6 101.5 694 100 698 C98 703 96 705 91 705 Z" fill="#4b4b4b"/>
<path d="M90 697.5 L96 697.5 M93 694.5 L93 700.5" stroke="#c8c8c8" stroke-width="1.8"/>
<path d="M116 694 L119 697 L122 694 M116 699 L119 702 L122 699" fill="none" stroke="#d0d0d0" stroke-width="1.6"/>
</svg>
<div class="t" style="left:31.50px;top:689.26px;font-size:13.00px;line-height:18px;color:#f8f8f8;font-weight:bold;transform:scaleX(0.9188);transform-origin:left center;">Model</div>
<div class="r" style="left:134.20px;top:691.20px;width:48.50px;height:25.40px;background:#454545;border:1px solid #646464;"></div>
<div class="r" style="left:184.20px;top:691.20px;width:64.30px;height:25.40px;background:#454545;border:1px solid #646464;"></div>
<div class="r" style="left:250.50px;top:691.20px;width:25.00px;height:25.40px;background:#454545;border:1px solid #646464;"></div>
<div class="r" style="left:276.20px;top:691.20px;width:101.90px;height:25.40px;background:#454545;border:1px solid #646464;"></div>
<div class="r" style="left:379.00px;top:691.20px;width:62.90px;height:25.40px;background:#454545;border:1px solid #646464;"></div>
<div class="r" style="left:443.00px;top:691.20px;width:39.50px;height:25.40px;background:#454545;border:1px solid #646464;"></div>
<div class="r" style="left:484.70px;top:691.20px;width:109.90px;height:25.40px;background:#454545;border:1px solid #646464;"></div>
<div class="r" style="left:596.80px;top:691.20px;width:39.60px;height:25.40px;background:#454545;border:1px solid #646464;"></div>
<div class="r" style="left:636.40px;top:691.20px;width:25.20px;height:25.40px;background:#454545;border:1px solid #646464;"></div>
<div class="r" style="left:663.80px;top:691.20px;width:24.20px;height:25.40px;background:#454545;border:1px solid #646464;"></div>
<div class="r" style="left:690.20px;top:691.20px;width:13.30px;height:25.40px;background:#454545;border:1px solid #646464;"></div>
<div class="t" style="left:137.80px;top:695.75px;font-size:12.50px;line-height:17px;color:#f4f4f4;transform:scaleX(0.8954);transform-origin:left center;">MODEL</div>
<svg width="1365" height="729">
<g stroke="#3d8af7" stroke-width="1.1"><path d="M190.5 697 L190.5 711 M193.5 697 L193.5 711 M196.5 697 L196.5 711 M199.5 697 L199.5 711 M202.5 697 L202.5 711 M189.5 699.5 L204.5 699.5 M189.5 702.5 L204.5 702.5 M189.5 705.5 L204.5 705.5 M189.5 708.5 L204.5 708.5"/></g>
<g fill="#c8c8c8"><rect x="214.0" y="697.5" width="1.2" height="1.2"/><rect x="214.0" y="700.2" width="1.2" height="1.2"/><rect x="214.0" y="702.9" width="1.2" height="1.2"/><rect x="214.0" y="705.6" width="1.2" height="1.2"/><rect x="214.0" y="708.3" width="1.2" height="1.2"/><rect x="214.0" y="711.0" width="1.2" height="1.2"/><rect x="216.7" y="697.5" width="1.2" height="1.2"/><rect x="216.7" y="700.2" width="1.2" height="1.2"/><rect x="216.7" y="702.9" width="1.2" height="1.2"/><rect x="216.7" y="705.6" width="1.2" height="1.2"/><rect x="216.7" y="708.3" width="1.2" height="1.2"/><rect x="216.7" y="711.0" width="1.2" height="1.2"/><rect x="219.4" y="697.5" width="1.2" height="1.2"/><rect x="219.4" y="700.2" width="1.2" height="1.2"/><rect x="219.4" y="702.9" width="1.2" height="1.2"/><rect x="219.4" y="705.6" width="1.2" height="1.2"/><rect x="219.4" y="708.3" width="1.2" height="1.2"/><rect x="219.4" y="711.0" width="1.2" height="1.2"/><rect x="222.1" y="697.5" width="1.2" height="1.2"/><rect x="222.1" y="700.2" width="1.2" height="1.2"/><rect x="222.1" y="702.9" width="1.2" height="1.2"/><rect x="222.1" y="705.6" width="1.2" height="1.2"/><rect x="222.1" y="708.3" width="1.2" height="1.2"/><rect x="222.1" y="711.0" width="1.2" height="1.2"/><rect x="224.8" y="697.5" width="1.2" height="1.2"/><rect x="224.8" y="700.2" width="1.2" height="1.2"/><rect x="224.8" y="702.9" width="1.2" height="1.2"/><rect x="224.8" y="705.6" width="1.2" height="1.2"/><rect x="224.8" y="708.3" width="1.2" height="1.2"/><rect x="224.8" y="711.0" width="1.2" height="1.2"/><rect x="227.5" y="697.5" width="1.2" height="1.2"/><rect x="227.5" y="700.2" width="1.2" height="1.2"/><rect x="227.5" y="702.9" width="1.2" height="1.2"/><rect x="227.5" y="705.6" width="1.2" height="1.2"/><rect x="227.5" y="708.3" width="1.2" height="1.2"/><rect x="227.5" y="711.0" width="1.2" height="1.2"/></g>
<g fill="#f0f0f0">
<path d="M237.3 702.3 L243.7 702.3 L240.5 706 Z"/><path d="M327.6 702.3 L335 702.3 L331.3 706 Z"/><path d="M366.9 702.3 L374.3 702.3 L370.6 706 Z"/>
<path d="M432 702.3 L438.5 702.3 L435.2 706 Z"/><path d="M473 702.3 L479.5 702.3 L476.2 706 Z"/><path d="M583.6 702.3 L590.2 702.3 L586.9 706 Z"/><path d="M625.4 702.3 L632 702.3 L628.7 706 Z"/>
</g>
<path d="M255 701 L261 701 M258 698 L258 704" stroke="#f0f0f0" stroke-width="1.1"/>
<rect x="261.5" y="704.5" width="9" height="4" rx="1.2" fill="#e8e8e8"/>
<path d="M282.5 697 L282.5 709.5 L294.5 709.5 M282.5 704.5 L287 704.5 L287 709.5" fill="none" stroke="#e0e0e0" stroke-width="1"/>
<circle cx="311.5" cy="704" r="6.2" fill="none" stroke="#3d8af7" stroke-width="2"/>
<path d="M311.5 704 L318 698 M311.5 704 L317 704" stroke="#3d8af7" stroke-width="1.6"/>
<path d="M343 694.5 L359 712.5 M351 694.5 L351 714" stroke="#c8c8c8" stroke-width="1.2"/>
<circle cx="351" cy="703.5" r="1.5" fill="none" stroke="#c8c8c8"/>
<path d="M384 710.5 L397 697 M384 710.5 L397.5 710.5" stroke="#3d8af7" stroke-width="1.6"/>
<rect x="388.5" y="703" width="3" height="3" fill="#3d8af7"/>
<rect x="405.5" y="698.5" width="11.5" height="11.5" fill="none" stroke="#3d8af7" stroke-width="1.4"/>
<rect x="403.5" y="696.5" width="3.5" height="3.5" fill="#23d020" stroke="#111" stroke-width="0.6"/>
<path d="M446.5 697.5 L463.5 697.5 M446.5 701 L463.5 701 M446.5 704.5 L456 704.5 M446.5 708 L456 708" stroke="#dadada" stroke-width="2"/>
<g fill="#3d8af7"><path d="M489 711 L494 703 L496 696 L499 703 L505 711 L497 707 Z"/><path d="M513 711 L518 703 L520 696 L523 703 L529 711 L521 707 Z"/></g>
<circle cx="500" cy="698.5" r="3" fill="none" stroke="#3d8af7" stroke-width="1.3"/>
<path d="M524 694.5 L527 698.5 L523.5 699 L527 703" fill="none" stroke="#3d8af7" stroke-width="1.2"/>
<path d="M537.5 711 L543 703 L545 695 L547.5 703 L553 711 L545 707 Z" fill="#a8a8a8"/>
<g transform="translate(609.5 704)"><circle r="4.8" fill="#bdbdbd"/><circle r="1.8" fill="#454545"/>
<path d="M-1.2 -6.6 L1.2 -6.6 L1.2 6.6 L-1.2 6.6 Z M-6.6 -1.2 L6.6 -1.2 L6.6 1.2 L-6.6 1.2 Z" fill="#bdbdbd" transform="rotate(0)"/>
<path d="M-1.2 -6.6 L1.2 -6.6 L1.2 6.6 L-1.2 6.6 Z M-6.6 -1.2 L6.6 -1.2 L6.6 1.2 L-6.6 1.2 Z" fill="#bdbdbd" transform="rotate(45)"/><circle r="1.8" fill="#454545"/></g>
<path d="M641.5 704 L656 704 M648.7 696.5 L648.7 711.5" stroke="#dcdcdc" stroke-width="1.8"/>
<circle cx="676" cy="704" r="8" fill="none" stroke="#bdbdbd" stroke-width="1.2"/>
<path d="M672 700.5 L677 705.5" stroke="#bdbdbd" stroke-width="1.4"/>
<rect x="693" y="705" width="10" height="7" fill="#e8d040"/>
<rect x="694" y="696" width="9" height="6" fill="#5a86d0"/>
<circle cx="696.5" cy="698.5" r="2" fill="none" stroke="#fff" stroke-width="1"/>
</svg>
<div class="t" style="left:562.50px;top:695.75px;font-size:12.50px;line-height:17px;color:#f4f4f4;transform:scaleX(0.9612);transform-origin:left center;">1:1</div>
<div class="r" style="left:8.00px;top:8.00px;width:41.00px;height:41.00px;border:1px solid #151515;background:linear-gradient(180deg,#ececec,#c4c4c4 40%,#a2a2a2 80%,#9a9a9a);border-radius:1px;box-shadow:inset 0 1px 0 #fafafa;"></div>
<svg width="1365" height="729" viewBox="0 0 1365 729">
<defs><linearGradient id="ared" x1="0" y1="0" x2="1" y2="1"><stop offset="0" stop-color="#e02228"/><stop offset="1" stop-color="#9c0c12"/></linearGradient></defs>
<path d="M24.3 13.3 L35.8 33.8 L31.2 37.8 L27.8 37.8 L27.8 34.4 L19.6 34.4 L19.6 37.8 L17 37.8 L13 33.8 Z" fill="url(#ared)"/>
<path d="M14.5 31 L30 24.5 L33 29.5 L16.5 34.5 Z" fill="#b8141a" opacity="0.55"/>
<path d="M19 23 L27.5 18.5 L29 21 L17.5 26 Z" fill="#f03a3e" opacity="0.35"/>
<path d="M38.8 26.3 L46.4 26.3 L42.6 30.6 Z" fill="#2e2e2e"/>
</svg>
<div class="r" style="left:712.00px;top:0.00px;width:647.50px;height:727.00px;border-radius:7px;background:linear-gradient(180deg,#b4ceee 0px,#a3c3ea 8px,#98bbe7 29px,#8db2e1 300px,#86abdd 727px);border:1px solid #2a3b52;box-shadow:inset 0 0 0 1px rgba(255,255,255,0.55);"></div>
<div class="r" style="left:760.00px;top:1.00px;width:480.00px;height:27.00px;background:linear-gradient(90deg,rgba(255,255,255,0) 0%,rgba(255,255,255,0.12) 35%,rgba(255,255,255,0.02) 60%,rgba(255,255,255,0.15) 85%,rgba(255,255,255,0) 100%);"></div>
<svg width="1365" height="729">
<defs><linearGradient id="picg" x1="0" y1="0" x2="0" y2="1"><stop offset="0" stop-color="#bfe0f0"/><stop offset="0.55" stop-color="#4f8fb0"/><stop offset="1" stop-color="#2d6a3a"/></linearGradient></defs>
<path d="M720 11.5 L720 8 L723.5 8 M732.3 8 L735.8 8 L735.8 11.5 M735.8 18.3 L735.8 21.7 L732.3 21.7 M723.5 21.7 L720 21.7 L720 18.3" fill="none" stroke="#3a86d4" stroke-width="1.6"/>
<rect x="722" y="10.2" width="12.2" height="9.8" rx="1.2" fill="#f4fbfd" stroke="#9fd2e6" stroke-width="0.6"/>
<rect x="723.2" y="11.1" width="9.6" height="7.6" fill="url(#picg)"/>
</svg>
<div class="t" style="left:741.5px;top:7px;font-size:13px;line-height:17px;color:#000;text-shadow:0 0 6px rgba(255,255,255,0.9),0 0 2px rgba(255,255,255,0.8);transform:scaleX(0.9292);transform-origin:left center;">gsrgsrg - Windows Photo Viewer</div>
<div class="r" style="left:1251.00px;top:0.50px;width:101.50px;height:19.50px;border:1px solid rgba(40,60,90,0.55);border-top:none;border-radius:0 0 5px 5px;background:linear-gradient(180deg,rgba(255,255,255,0.25),rgba(255,255,255,0.05));box-shadow:inset 0 0 0 1px rgba(255,255,255,0.35);"></div>
<div class="r" style="left:1278.00px;top:1.00px;width:1.00px;height:18.50px;background:rgba(40,60,90,0.45);"></div>
<div class="r" style="left:1305.50px;top:1.00px;width:1.00px;height:18.50px;background:rgba(40,60,90,0.45);"></div>
<svg width="1365" height="729">
<rect x="1259" y="10.5" width="12" height="4" rx="1" fill="#fafafa" stroke="#2a3346" stroke-width="1"/>
<rect x="1286.5" y="5.5" width="11.5" height="9" rx="0.8" fill="#fafafa" stroke="#2a3346" stroke-width="1"/>
<rect x="1289" y="8" width="6.5" height="3.2" fill="#9fbde4" stroke="#2a3346" stroke-width="0.8"/>
<path d="M1323.5 5.5 L1327.3 5.5 L1329.5 8.3 L1331.7 5.5 L1335.5 5.5 L1331.7 10 L1335.5 14.5 L1331.7 14.5 L1329.5 11.7 L1327.3 14.5 L1323.5 14.5 L1327.3 10 Z" fill="#fafafa" stroke="#2a3346" stroke-width="1"/>
</svg>
<div class="r" style="left:719.00px;top:29.00px;width:634.00px;height:634.50px;background:#eef2f9;border:1px solid #5f7391;"></div>
<div class="r" style="left:720.00px;top:30.00px;width:632.00px;height:29.00px;background:linear-gradient(180deg,#fbfdff 0%,#eef4fb 45%,#dde7f3 50%,#dce6f2 100%);border-bottom:1px solid #9aaabf;"></div>
<div class="t" style="left:738.00px;top:36.75px;font-size:12.50px;line-height:17px;color:#1e395b;transform:scaleX(0.8987);transform-origin:left center;">File</div>
<div class="t" style="left:798.40px;top:36.75px;font-size:12.50px;line-height:17px;color:#1e395b;transform:scaleX(0.9610);transform-origin:left center;">Print</div>
<div class="t" style="left:862.50px;top:36.75px;font-size:12.50px;line-height:17px;color:#1e395b;transform:scaleX(0.9007);transform-origin:left center;">E-mail</div>
<div class="t" style="left:924.10px;top:36.75px;font-size:12.50px;line-height:17px;color:#1e395b;transform:scaleX(0.9166);transform-origin:left center;">Burn</div>
<div class="t" style="left:984.10px;top:36.75px;font-size:12.50px;line-height:17px;color:#1e395b;transform:scaleX(0.9256);transform-origin:left center;">Open</div>
<svg width="1365" height="729"><path d="M771.5 42 L779.3 42 L775.4 46 Z" fill="#1e395b"/><path d="M835.0 42 L842.3 42 L838.6 46 Z" fill="#1e395b"/><path d="M961.3 42 L968.6 42 L965.0 46 Z" fill="#1e395b"/><path d="M1023.8 42 L1031.0 42 L1027.4 46 Z" fill="#1e395b"/>
<defs><radialGradient id="helpg" cx="0.4" cy="0.3" r="0.8"><stop offset="0" stop-color="#7aa6ea"/><stop offset="1" stop-color="#1a3f9a"/></radialGradient></defs>
<circle cx="1334" cy="42.8" r="7.6" fill="url(#helpg)" stroke="#7f8fa8" stroke-width="1"/>
<text x="1334" y="47.3" font-family="Liberation Sans" font-weight="bold" font-size="11.5" fill="#fff" text-anchor="middle">?</text>
</svg>
<div class="r" style="left:736.00px;top:89.50px;width:599.70px;height:543.20px;background:#ffffff;"></div>
<svg width="1365" height="729"><g fill="none" stroke="#0a0a0a" stroke-width="1.9"><path d="M950.70 278.30 L1087.21 167.57 A57.60 57.60 0 0 1 1181.10 212.30 L1181.10 276.94 A108.00 108.00 0 0 1 1214.86 310.70"/><path d="M1184.64 310.70 L1279.50 310.70 L1279.50 425.90 L1184.64 425.90"/><path d="M1214.86 425.90 A108.00 108.00 0 0 1 1181.10 459.66 L1181.10 524.30 A57.60 57.60 0 0 1 1087.21 569.03 L950.70 458.30"/><path d="M950.70 353.90 L950.70 278.30 L816.30 278.30 L816.30 458.30 L950.70 458.30"/><path d="M950.70 382.70 L950.70 458.30"/><path d="M1040.74 353.90 L849.90 353.90 L849.90 382.70 L1040.74 382.70 L1040.74 382.70"/><circle cx="1123.50" cy="368.30" r="84.00"/><circle cx="1123.50" cy="368.30" r="43.20"/><circle cx="1123.50" cy="212.30" r="43.20"/><circle cx="1123.50" cy="212.30" r="21.60"/><circle cx="1123.50" cy="524.30" r="43.20"/><circle cx="1123.50" cy="524.30" r="21.60"/></g><line x1="784" y1="368.5" x2="1300" y2="368.5" stroke="#111" stroke-width="1" stroke-dasharray="54 10 11 11" stroke-dashoffset="28"/><line x1="1123.50" y1="131.60" x2="1123.50" y2="368.50" stroke="#111" stroke-width="1.00"/><line x1="883.50" y1="132.20" x2="883.50" y2="275.00" stroke="#111" stroke-width="1.00"/><line x1="883.50" y1="138.20" x2="1123.50" y2="138.20" stroke="#111" stroke-width="1.00"/><path d="M884.00 138.20 L894.00 135.90 L894.00 140.50 Z" fill="#111"/><path d="M1123.00 138.20 L1113.00 140.50 L1113.00 135.90 Z" fill="#111"/><line x1="758.00" y1="278.00" x2="813.00" y2="278.00" stroke="#111" stroke-width="1.00"/><line x1="758.00" y1="457.80" x2="813.00" y2="457.80" stroke="#111" stroke-width="1.00"/><line x1="764.50" y1="278.00" x2="764.50" y2="359.30" stroke="#111" stroke-width="1.00"/><line x1="764.50" y1="377.30" x2="764.50" y2="457.80" stroke="#111" stroke-width="1.00"/><path d="M764.50 278.50 L766.80 288.50 L762.20 288.50 Z" fill="#111"/><path d="M764.50 457.30 L762.20 447.30 L766.80 447.30 Z" fill="#111"/><line x1="816.00" y1="310.00" x2="849.50" y2="310.00" stroke="#111" stroke-width="1.00"/><line x1="849.50" y1="304.00" x2="849.50" y2="350.50" stroke="#111" stroke-width="1.00"/><path d="M817.00 310.00 L827.00 307.70 L827.00 312.30 Z" fill="#111"/><path d="M849.00 310.00 L839.00 312.30 L839.00 307.70 Z" fill="#111"/><line x1="833.00" y1="353.60" x2="847.00" y2="353.60" stroke="#111" stroke-width="1.00"/><line x1="833.00" y1="382.90" x2="847.00" y2="382.90" stroke="#111" stroke-width="1.00"/><line x1="839.40" y1="328.40" x2="839.40" y2="353.60" stroke="#111" stroke-width="1.00"/><path d="M839.40 353.30 L837.10 344.30 L841.70 344.30 Z" fill="#111"/><line x1="839.40" y1="383.20" x2="839.40" y2="405.70" stroke="#111" stroke-width="1.00"/><path d="M839.40 383.20 L841.70 392.20 L837.10 392.20 Z" fill="#111"/><line x1="820.50" y1="405.70" x2="839.40" y2="405.70" stroke="#111" stroke-width="1.00"/><line x1="816.00" y1="461.00" x2="816.00" y2="497.30" stroke="#111" stroke-width="1.00"/><line x1="950.80" y1="461.00" x2="950.80" y2="497.30" stroke="#111" stroke-width="1.00"/><line x1="816.00" y1="491.00" x2="950.80" y2="491.00" stroke="#111" stroke-width="1.00"/><path d="M816.50 491.00 L826.50 488.70 L826.50 493.30 Z" fill="#111"/><path d="M950.30 491.00 L940.30 493.30 L940.30 488.70 Z" fill="#111"/><line x1="1278.80" y1="265.00" x2="1278.80" y2="309.00" stroke="#111" stroke-width="1.00"/><line x1="1123.50" y1="271.40" x2="1278.80" y2="271.40" stroke="#111" stroke-width="1.00"/><path d="M1124.00 271.40 L1134.00 269.10 L1134.00 273.70 Z" fill="#111"/><path d="M1278.30 271.40 L1268.30 273.70 L1268.30 269.10 Z" fill="#111"/><line x1="1282.00" y1="310.60" x2="1319.60" y2="310.60" stroke="#111" stroke-width="1.00"/><line x1="1282.00" y1="425.60" x2="1319.60" y2="425.60" stroke="#111" stroke-width="1.00"/><line x1="1312.50" y1="310.60" x2="1312.50" y2="356.00" stroke="#111" stroke-width="1.00"/><line x1="1312.50" y1="381.00" x2="1312.50" y2="425.60" stroke="#111" stroke-width="1.00"/><path d="M1312.50 311.00 L1314.80 321.00 L1310.20 321.00 Z" fill="#111"/><path d="M1312.50 425.20 L1310.20 415.20 L1314.80 415.20 Z" fill="#111"/><line x1="1123.50" y1="212.30" x2="1180.60" y2="162.20" stroke="#3a3a3a" stroke-width="0.85"/><line x1="1180.60" y1="162.20" x2="1201.80" y2="162.20" stroke="#777" stroke-width="0.90"/><path d="M1139.74 198.05 L1133.67 206.30 L1130.77 203.00 Z" fill="#111"/><line x1="1123.50" y1="368.30" x2="1253.10" y2="453.80" stroke="#3a3a3a" stroke-width="0.85"/><line x1="1253.10" y1="453.80" x2="1286.40" y2="453.80" stroke="#777" stroke-width="0.90"/><path d="M1193.62 414.56 L1184.06 410.89 L1186.48 407.21 Z" fill="#111"/><line x1="1123.50" y1="368.30" x2="1253.10" y2="488.40" stroke="#3a3a3a" stroke-width="0.85"/><line x1="1253.10" y1="488.40" x2="1285.50" y2="488.40" stroke="#777" stroke-width="0.90"/><path d="M1155.19 397.66 L1146.36 392.48 L1149.35 389.25 Z" fill="#111"/><line x1="1123.50" y1="368.30" x2="1219.80" y2="514.20" stroke="#3a3a3a" stroke-width="0.85"/><line x1="1219.80" y1="514.20" x2="1252.00" y2="514.20" stroke="#777" stroke-width="0.90"/><path d="M1182.99 458.44 L1175.65 451.30 L1179.32 448.88 Z" fill="#111"/><line x1="1123.50" y1="524.30" x2="1163.30" y2="600.20" stroke="#3a3a3a" stroke-width="0.85"/><line x1="1163.30" y1="600.20" x2="1193.60" y2="600.20" stroke="#777" stroke-width="0.90"/><path d="M1150.25 575.31 L1143.66 567.48 L1147.55 565.43 Z" fill="#111"/><line x1="1123.50" y1="524.30" x2="1116.30" y2="621.80" stroke="#3a3a3a" stroke-width="0.85"/><line x1="1116.30" y1="621.80" x2="1147.60" y2="621.80" stroke="#777" stroke-width="0.90"/><path d="M1120.32 567.38 L1118.86 557.25 L1123.25 557.57 Z" fill="#111"/></svg>
<div class="t" style="left:990.40px;top:118.03px;font-size:16.50px;line-height:23px;color:#1a1a1a;transform:scaleX(0.9409);transform-origin:left center;">100</div>
<div class="t" style="left:755.80px;top:356.73px;font-size:16.50px;line-height:23px;color:#1a1a1a;transform:scaleX(0.9427);transform-origin:left center;">75</div>
<div class="t" style="left:824.60px;top:290.13px;font-size:16.50px;line-height:23px;color:#1a1a1a;transform:scaleX(0.9264);transform-origin:left center;">14</div>
<div class="t" style="left:820.50px;top:387.23px;font-size:16.50px;line-height:23px;color:#1a1a1a;transform:scaleX(0.9482);transform-origin:left center;">12</div>
<div class="t" style="left:874.20px;top:471.93px;font-size:16.50px;line-height:23px;color:#1a1a1a;transform:scaleX(0.9754);transform-origin:left center;">56</div>
<div class="t" style="left:1238.70px;top:251.63px;font-size:16.50px;line-height:23px;color:#1a1a1a;transform:scaleX(1.0136);transform-origin:left center;">65</div>
<div class="t" style="left:1304.70px;top:357.33px;font-size:16.50px;line-height:23px;color:#1a1a1a;transform:scaleX(0.9482);transform-origin:left center;">48</div>
<div class="t" style="left:1181.40px;top:142.33px;font-size:16.50px;line-height:23px;color:#1a1a1a;transform:scaleX(0.9862);transform-origin:left center;">R9</div>
<div class="t" style="left:1256.80px;top:434.33px;font-size:16.50px;line-height:23px;color:#1a1a1a;transform:scaleX(0.9780);transform-origin:left center;">R35</div>
<div class="t" style="left:1256.50px;top:468.13px;font-size:16.50px;line-height:23px;color:#1a1a1a;transform:scaleX(0.9515);transform-origin:left center;">R18</div>
<div class="t" style="left:1223.00px;top:494.83px;font-size:16.50px;line-height:23px;color:#1a1a1a;transform:scaleX(0.9581);transform-origin:left center;">R45</div>
<div class="t" style="left:1164.70px;top:580.13px;font-size:16.50px;line-height:23px;color:#1a1a1a;transform:scaleX(0.9515);transform-origin:left center;">R24</div>
<div class="t" style="left:1118.00px;top:603.23px;font-size:16.50px;line-height:23px;color:#1a1a1a;transform:scaleX(0.9581);transform-origin:left center;">R18</div>
<svg width="1365" height="729">
<defs>
<linearGradient id="pillg" x1="0" y1="0" x2="0" y2="1"><stop offset="0" stop-color="#b4cdef" stop-opacity="0.55"/><stop offset="1" stop-color="#9fbde6" stop-opacity="0.35"/></linearGradient>
<linearGradient id="silv" x1="0" y1="0" x2="0" y2="1"><stop offset="0" stop-color="#eef2f8"/><stop offset="0.45" stop-color="#cdd5e0"/><stop offset="0.5" stop-color="#a6b1c1"/><stop offset="1" stop-color="#b4c0d0"/></linearGradient>
<linearGradient id="bigb" x1="0" y1="0" x2="0" y2="1"><stop offset="0" stop-color="#b0b2e6"/><stop offset="0.42" stop-color="#3d48c6"/><stop offset="0.5" stop-color="#0a1896"/><stop offset="0.72" stop-color="#0b4fdc"/><stop offset="1" stop-color="#46c4ff"/></linearGradient>
<linearGradient id="bigr" x1="0" y1="0" x2="0" y2="1"><stop offset="0" stop-color="#e8f0fa"/><stop offset="1" stop-color="#8aa6cc"/></linearGradient>
<linearGradient id="pic2" x1="0" y1="0" x2="0" y2="1"><stop offset="0" stop-color="#cfe6f5"/><stop offset="0.5" stop-color="#6ea7c6"/><stop offset="1" stop-color="#3f7a3c"/></linearGradient>
</defs>
<rect x="834.6" y="678.8" width="403.5" height="30.8" rx="15.4" fill="url(#pillg)" stroke="#4d6b96" stroke-width="1" stroke-opacity="0.8"/>
<rect x="835.6" y="679.8" width="401.5" height="28.8" rx="14.4" fill="none" stroke="#ffffff" stroke-opacity="0.35" stroke-width="1"/>
<!-- zoom -->
<circle cx="874" cy="692.5" r="5.8" fill="#e9f1fb" stroke="#1d47a8" stroke-width="2.2"/>
<path d="M871 692.5 L877 692.5 M874 689.5 L874 695.5" stroke="#1d47a8" stroke-width="1.8"/>
<path d="M869.5 697 L865.5 701.5" stroke="#1d47a8" stroke-width="3" stroke-linecap="round"/>
<path d="M886 692.5 L893 692.5 L889.5 696.5 Z" fill="#3055b0"/>
<!-- fit -->
<g fill="none" stroke="#6c86aa" stroke-width="1.6">
<path d="M924 692 L924 688.5 L927.5 688.5 M935.5 688.5 L939 688.5 L939 692 M939 697.5 L939 701 L935.5 701 M927.5 701 L924 701 L924 697.5"/>
<rect x="927.8" y="692.2" width="7.4" height="5.2"/>
</g>
<!-- prev / next -->
<path d="M972 682.7 L1014.6 682.7 L1014.6 706.5 L972 706.5 Q963.8 706.5 963.8 694.6 Q963.8 682.7 972 682.7 Z" fill="url(#silv)" stroke="#5a6f8f" stroke-width="1"/>
<path d="M1057 682.7 L1100.5 682.7 Q1108.7 682.7 1108.7 694.6 Q1108.7 706.5 1100.5 706.5 L1057 706.5 Z" fill="url(#silv)" stroke="#5a6f8f" stroke-width="1"/>
<rect x="980.5" y="688" width="3" height="12.4" fill="#1442b0"/>
<path d="M995.5 688 L984.5 694.2 L995.5 700.4 Z" fill="#1442b0"/>
<rect x="1089" y="688" width="3" height="12.4" fill="#1442b0"/>
<path d="M1077 688 L1088 694.2 L1077 700.4 Z" fill="#1442b0"/>
<!-- big button -->
<circle cx="1036" cy="694.2" r="24" fill="#a9c3e8" fill-opacity="0.6" stroke="#6f88ae" stroke-width="1"/>
<circle cx="1036" cy="694.2" r="20" fill="url(#bigb)" stroke="#0b2c7c" stroke-width="1"/>

<rect x="1024.7" y="684.8" width="22.4" height="19.3" rx="2" fill="#f4f6f8" stroke="#b0bccb" stroke-width="0.8"/>
<rect x="1027.8" y="689.2" width="16.2" height="10.6" fill="url(#pic2)"/>
<!-- rotate -->
<path d="M1133.5 689.5 A5.5 5.5 0 1 1 1128.7 697.75" fill="none" stroke="#1b2f8e" stroke-width="2.6"/>
<path d="M1126.5 689.5 L1134 685.5 L1134 693.5 Z" fill="#2163c9"/>
<path d="M1166.4 689.5 A5.5 5.5 0 1 0 1171.2 697.75" fill="none" stroke="#1b2f8e" stroke-width="2.6"/>
<path d="M1173.4 689.5 L1165.9 685.5 L1165.9 693.5 Z" fill="#2163c9"/>
<line x1="1190.5" y1="685" x2="1190.5" y2="703.6" stroke="#5f7aa5" stroke-width="1"/>

<path d="M1206 687 L1219.5 700.3 M1219 687.5 L1206.5 700" stroke="#b8202a" stroke-width="2.2"/>
</svg>
</body></html>
